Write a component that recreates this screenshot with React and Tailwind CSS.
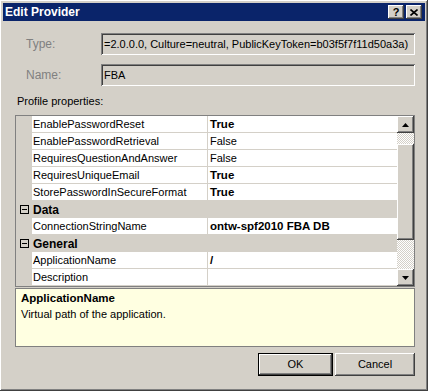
import React from "react";

const raised = "shadow-[inset_-1px_-1px_0_#404040,inset_1px_1px_0_#ffffff,inset_-2px_-2px_0_#808080]";
const sunken = "shadow-[inset_1px_1px_0_#808080,inset_-1px_-1px_0_#ffffff,inset_2px_2px_0_#404040,inset_-2px_-2px_0_#d4d0c8]";

const rows = [
    { type: "prop", name: "EnablePasswordReset", value: "True", bold: true },
    { type: "prop", name: "EnablePasswordRetrieval", value: "False" },
    { type: "prop", name: "RequiresQuestionAndAnswer", value: "False" },
    { type: "prop", name: "RequiresUniqueEmail", value: "True", bold: true },
    { type: "prop", name: "StorePasswordInSecureFormat", value: "True", bold: true },
    { type: "cat", name: "Data" },
    { type: "prop", name: "ConnectionStringName", value: "ontw-spf2010 FBA DB", bold: true },
    { type: "cat", name: "General" },
    { type: "prop", name: "ApplicationName", value: "/", bold: true },
    { type: "prop", name: "Description", value: "" },
];

function Collapse() {
    return (
        <div className="relative w-[9px] h-[9px] border border-black">
            <div className="absolute left-[1px] right-[1px] top-[3px] h-px bg-black" />
        </div>
    );
}

function Arrow({ down }) {
    return (
        <svg width="7" height="4" viewBox="0 0 7 4">
            {down ? <path d="M0 0h7L3.5 4z" fill="#000" /> : <path d="M0 4h7L3.5 0z" fill="#000" />}
        </svg>
    );
}

function GridRow({ row }) {
    if (row.type === "cat") {
        return (
            <div className="flex h-[17px] items-center bg-[#d4d0c8]">
                <div className="w-[16px] shrink-0 flex items-center justify-center">
                    <Collapse />
                </div>
                <span className="pl-[1px] font-bold text-[12px]">{row.name}</span>
            </div>
        );
    }
    return (
        <div className="flex h-[17px]">
            <div className="w-[16px] shrink-0 bg-[#d4d0c8]" />
            <div className="w-[176px] shrink-0 bg-white border-b border-r border-[#d4d0c8] pl-[1px] leading-[16px] whitespace-nowrap overflow-hidden">
                {row.name}
            </div>
            <div className={`flex-1 bg-white border-b border-[#d4d0c8] pl-[2px] leading-[16px] whitespace-nowrap overflow-hidden ${row.bold ? "font-bold text-[11.5px]" : ""}`}>
                {row.value}
            </div>
        </div>
    );
}

export default function App() {
    return (
        <div
            className={`w-[428px] h-[391px] bg-[#d4d0c8] p-[3px] flex flex-col text-[11px] text-black ${raised}`}
            style={{ fontFamily: "Tahoma, 'Liberation Sans', Arial, sans-serif" }}>
            {/* title bar */}
            <div className="h-[18px] bg-[#0a246a] flex items-center justify-between pl-[2px] pr-[3px]">
                <span className="text-white font-bold text-[12px]">Edit Provider</span>
                <div className="flex gap-[2px]">
                    <div className={`w-[16px] h-[14px] bg-[#d4d0c8] flex items-center justify-center font-bold text-[11px] leading-none ${raised}`}>?</div>
                    <div className={`w-[16px] h-[14px] bg-[#d4d0c8] flex items-center justify-center ${raised}`}>
                        <svg width="8" height="7" viewBox="0 0 8 7">
                            <path d="M0.5 0.5L7.5 6.5M7.5 0.5L0.5 6.5" stroke="#000" strokeWidth="1.6" />
                        </svg>
                    </div>
                </div>
            </div>

            <div className="pl-[12px] w-[412px] flex flex-col">
                {/* Type */}
                <div className="flex items-center mt-[12px] h-[22px]">
                    <span className="w-[86px] pl-[11px] text-[#808080] text-[12px]">Type:</span>
                    <div className={`flex-1 h-[22px] flex items-center pl-[3px] overflow-hidden whitespace-nowrap ${sunken}`}>
                        =2.0.0.0, Culture=neutral, PublicKeyToken=b03f5f7f11d50a3a)
                    </div>
                </div>
                {/* Name */}
                <div className="flex items-center mt-[9px] h-[22px]">
                    <span className="w-[86px] pl-[11px] text-[#808080] text-[12px]">Name:</span>
                    <div className={`flex-1 h-[22px] flex items-center pl-[3px] overflow-hidden whitespace-nowrap ${sunken}`}>FBA</div>
                </div>

                <div className="mt-[8px] ml-[2px] leading-[14px]">Profile properties:</div>

                {/* property grid */}
                <div className="mt-[7px] h-[172px] border border-[#808080] flex">
                    <div className="flex-1 flex flex-col">
                        {rows.map((r) => (
                            <GridRow key={r.name} row={r} />
                        ))}
                    </div>
                    <div className="w-[17px] flex flex-col bg-[repeating-conic-gradient(#d4d0c8_0_25%,#ffffff_0_50%)] bg-[length:2px_2px]">
                        <div className={`h-[17px] bg-[#d4d0c8] flex items-center justify-center ${raised}`}>
                            <Arrow />
                        </div>
                        <div className="h-[11px]" />
                        <div className={`h-[96px] bg-[#d4d0c8] ${raised}`} />
                        <div className="flex-1" />
                        <div className={`h-[17px] bg-[#d4d0c8] flex items-center justify-center ${raised}`}>
                            <Arrow down />
                        </div>
                    </div>
                </div>

                {/* description */}
                <div className="mt-[1px] h-[59px] border border-[#808080] bg-[#ffffe1] pl-[5px] pt-[3px]">
                    <div className="font-bold leading-[13px] text-[11.5px]">ApplicationName</div>
                    <div className="mt-[3px] leading-[13px]">Virtual path of the application.</div>
                </div>

                {/* buttons */}
                <div className="mt-[6px] flex gap-[2px] pl-[243px]">
                    <div className="w-[80px] h-[23px] border border-black">
                        <div className={`w-full h-full bg-[#d4d0c8] flex items-center justify-center ${raised}`}>OK</div>
                    </div>
                    <div className={`w-[80px] h-[23px] shrink-0 bg-[#d4d0c8] flex items-center justify-center ${raised}`}>Cancel</div>
                </div>
            </div>
        </div>
    );
}
